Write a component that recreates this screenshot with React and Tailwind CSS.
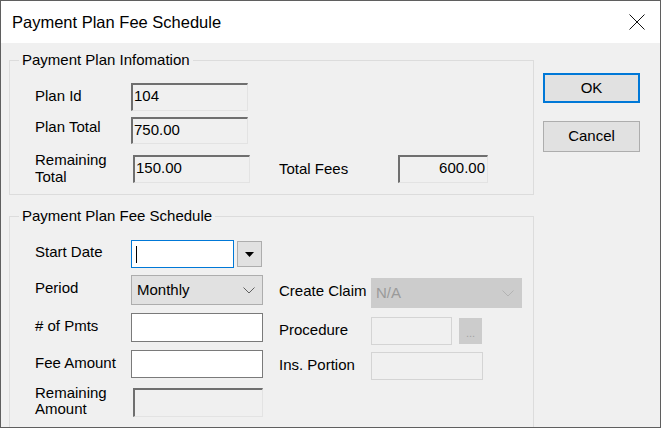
import React from 'react';

const Sunken = ({ className = '', children }) => (
  <div
    className={`flex items-start pl-[1px] pt-[2px] leading-[18px] bg-[#f0f0f0] border-t-2 border-l-2 border-r border-b border-t-[#6f6f6f] border-l-[#6f6f6f] border-r-[#e3e3e3] border-b-[#e3e3e3] ${className}`}
  >
    {children}
  </div>
);

const Chevron = ({ color }) => (
  <svg width="12" height="7" viewBox="0 0 12 7" fill="none">
    <path d="M0.5 0.5 L6 6 L11.5 0.5" stroke={color} strokeWidth="1" />
  </svg>
);

export default function App() {
  return (
    <div className="w-[663px] h-[429px] bg-white font-['Liberation_Sans',Arial,sans-serif] text-[15px] text-black">
      <div className="w-[661px] h-[428px] border border-[#5f5f5f] bg-[#f0f0f0] flex flex-col overflow-hidden">
        {/* title bar */}
        <div className="h-[42px] shrink-0 bg-white flex items-center justify-between pl-[11px] pr-[15px]">
          <span className="text-[16.5px]">Payment Plan Fee Schedule</span>
          <svg width="16" height="16" viewBox="0 0 16 16" fill="none">
            <path d="M0.5 0.5 L15.5 15.5 M15.5 0.5 L0.5 15.5" stroke="#111" strokeWidth="1" />
          </svg>
        </div>

        <div className="flex flex-1 min-h-0">
          <div className="pl-[8px]">
            {/* group 1 */}
            <fieldset className="mt-[8px] w-[525px] border border-[#dcdcdc] p-0">
              <legend className="ml-[9px] px-[3px] leading-[18px]">Payment Plan Infomation</legend>
              <div className="pl-[25px] pt-[14px] pb-[11px]">
                <div className="flex items-center h-[28px]">
                  <span className="w-[96px] -mt-[1px]">Plan Id</span>
                  <Sunken className="w-[117px] h-[28px]">104</Sunken>
                </div>
                <div className="flex items-center h-[27px] mt-[6px]">
                  <span className="w-[96px] -mt-[6px]">Plan Total</span>
                  <Sunken className="w-[117px] h-[27px]">750.00</Sunken>
                </div>
                <div className="flex items-center h-[28px] mt-[11px]">
                  <span className="w-[98px] leading-[17px] -mt-[2px]">
                    Remaining
                    <br />
                    Total
                  </span>
                  <Sunken className="w-[117px] h-[28px]">150.00</Sunken>
                  <span className="w-[119px] ml-[29px]">Total Fees</span>
                  <Sunken className="w-[90px] h-[28px] justify-end pr-[2px]">600.00</Sunken>
                </div>
              </div>
            </fieldset>

            {/* group 2 */}
            <fieldset className="mt-[12px] w-[525px] border border-[#dcdcdc] p-0">
              <legend className="ml-[9px] px-[3px] leading-[18px]">Payment Plan Fee Schedule</legend>
              <div className="flex items-start pl-[25px] pt-[15px] pb-[40px]">
                <div className="flex flex-col">
                  <div className="flex items-center h-[28px]">
                    <span className="w-[96px] -mt-[3px]">Start Date</span>
                    <div className="w-[103px] h-[28px] bg-white border border-[#0078d7] flex items-center pl-[4px]">
                      <span className="w-px h-[17px] bg-black" />
                    </div>
                    <div className="ml-[3px] w-[25px] h-[26px] bg-[#e1e1e1] border border-[#adadad] flex items-center justify-center">
                      <svg width="9" height="5" viewBox="0 0 9 5">
                        <path d="M0 0 H9 L4.5 5 Z" fill="#000" />
                      </svg>
                    </div>
                  </div>
                  <div className="flex items-center h-[30px] mt-[7px]">
                    <span className="w-[96px] -mt-[3px]">Period</span>
                    <div className="w-[132px] h-[30px] bg-[#e1e1e1] border border-[#adadad] flex items-center justify-between pl-[5px] pr-[7px]">
                      <span>Monthly</span>
                      <Chevron color="#606060" />
                    </div>
                  </div>
                  <div className="flex items-center h-[29px] mt-[8px]">
                    <span className="w-[96px] -mt-[2px]">&#35; of Pmts</span>
                    <div className="w-[132px] h-[29px] bg-white border border-[#7a7a7a]" />
                  </div>
                  <div className="flex items-center h-[28px] mt-[8px]">
                    <span className="w-[96px] -mt-[2px]">Fee Amount</span>
                    <div className="w-[132px] h-[28px] bg-white border border-[#7a7a7a]" />
                  </div>
                  <div className="flex items-center h-[29px] mt-[10px]">
                    <span className="w-[98px] leading-[16px] -mt-[3px]">
                      Remaining
                      <br />
                      Amount
                    </span>
                    <Sunken className="w-[130px] h-[29px]" />
                  </div>
                </div>

                <div className="flex flex-col ml-[16px] mt-[38px]">
                  <div className="flex items-center h-[30px]">
                    <span className="w-[92px] -mt-[4px]">Create Claim</span>
                    <div className="w-[151px] h-[30px] bg-[#cccccc] border border-[#cccccc] flex items-center justify-between pl-[4px] pr-[7px] text-[#9a9a9a]">
                      <span>N/A</span>
                      <Chevron color="#b3b3b3" />
                    </div>
                  </div>
                  <div className="flex items-center h-[28px] mt-[9px]">
                    <span className="w-[92px] -mt-[2px]">Procedure</span>
                    <div className="w-[81px] h-[28px] bg-[#f0f0f0] border border-[#d4d4d4]" />
                    <div className="ml-[7px] w-[23px] h-[26px] bg-[#cccccc] border border-[#cccccc] flex items-end justify-center pb-[4px] text-[11px] leading-none text-[#a3a3a3]">
                      ...
                    </div>
                  </div>
                  <div className="flex items-center h-[28px] mt-[7px]">
                    <span className="w-[92px] -mt-[2px]">Ins. Portion</span>
                    <div className="w-[112px] h-[28px] bg-[#f0f0f0] border border-[#d4d4d4]" />
                  </div>
                </div>
              </div>
            </fieldset>
          </div>

          {/* buttons */}
          <div className="flex flex-col ml-[9px] mt-[30px]">
            <div className="w-[97px] h-[30px] bg-[#e1e1e1] border-2 border-[#0078d7] flex items-center justify-center">
              OK
            </div>
            <div className="mt-[18px] w-[97px] h-[31px] bg-[#e1e1e1] border border-[#adadad] flex items-center justify-center">
              Cancel
            </div>
          </div>
        </div>
      </div>
    </div>
  );
}
